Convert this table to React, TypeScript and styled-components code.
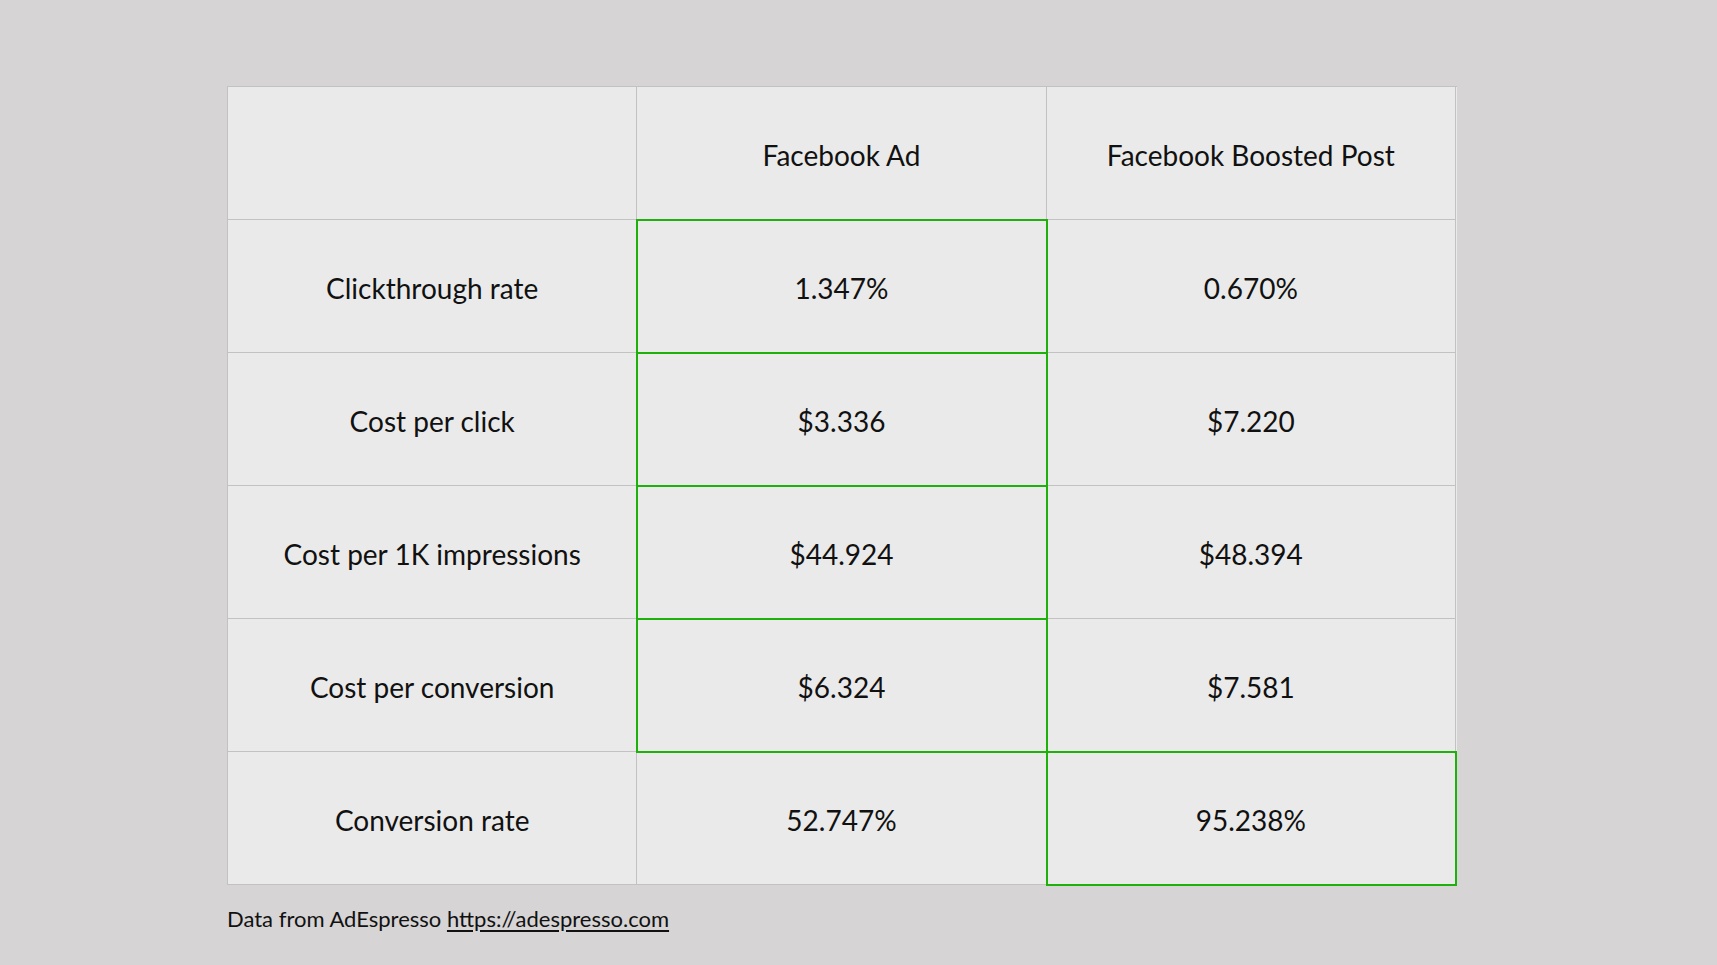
import React from "react";
import styled, { createGlobalStyle } from "styled-components";

const Global = createGlobalStyle`
  html, body { margin: 0; padding: 0; }
  body {
    background: #d6d4d5;
    font-family: "Lato", "Open Sans", sans-serif;
    color: #111;
  }
`;

const Page = styled.div`
  width: 1717px;
  height: 965px;
  box-sizing: border-box;
  padding: 86px 0 0 227px;
  background: #d6d4d5;
`;

const Table = styled.div`
  display: grid;
  grid-template-columns: repeat(3, 409.33px);
  grid-auto-rows: 133px;
  width: 1229px;
  border-top: 1px solid #c2c2c2;
  border-left: 1px solid #c2c2c2;
  background: #eaeaea;
`;

const Cell = styled.div<{ $hl?: boolean }>`
  display: flex;
  align-items: center;
  justify-content: center;
  box-sizing: border-box;
  padding-top: 4px;
  border-right: 1px solid #c2c2c2;
  border-bottom: 1px solid #c2c2c2;
  font-size: 28px;
  color: #111;
  position: relative;
  z-index: ${(p) => (p.$hl ? 1 : 0)};
  outline: ${(p) => (p.$hl ? "2.5px solid #1eb00b" : "none")};
  outline-offset: -1px;
`;

const Note = styled.div`
  margin-top: 20px;
  font-size: 22px;
  color: #111;
`;

const Link = styled.a`
  color: #111;
  text-decoration: underline;
  text-underline-offset: 3px;
`;

type Row = { label: string; ad: string; post: string; hl: "ad" | "post" | "" };

const rows: Row[] = [
  { label: "Clickthrough rate", ad: "1.347%", post: "0.670%", hl: "ad" },
  { label: "Cost per click", ad: "$3.336", post: "$7.220", hl: "ad" },
  { label: "Cost per 1K impressions", ad: "$44.924", post: "$48.394", hl: "ad" },
  { label: "Cost per conversion", ad: "$6.324", post: "$7.581", hl: "ad" },
  { label: "Conversion rate", ad: "52.747%", post: "95.238%", hl: "post" },
];

export default function App() {
  return (
    <>
      <Global />
      <Page>
        <Table>
          <Cell />
          <Cell>Facebook Ad</Cell>
          <Cell>Facebook Boosted Post</Cell>
          {rows.map((r) => (
            <React.Fragment key={r.label}>
              <Cell>{r.label}</Cell>
              <Cell $hl={r.hl === "ad"}>{r.ad}</Cell>
              <Cell $hl={r.hl === "post"}>{r.post}</Cell>
            </React.Fragment>
          ))}
        </Table>
        <Note>
          Data from AdEspresso <Link href="#">https://adespresso.com</Link>
        </Note>
      </Page>
    </>
  );
}
